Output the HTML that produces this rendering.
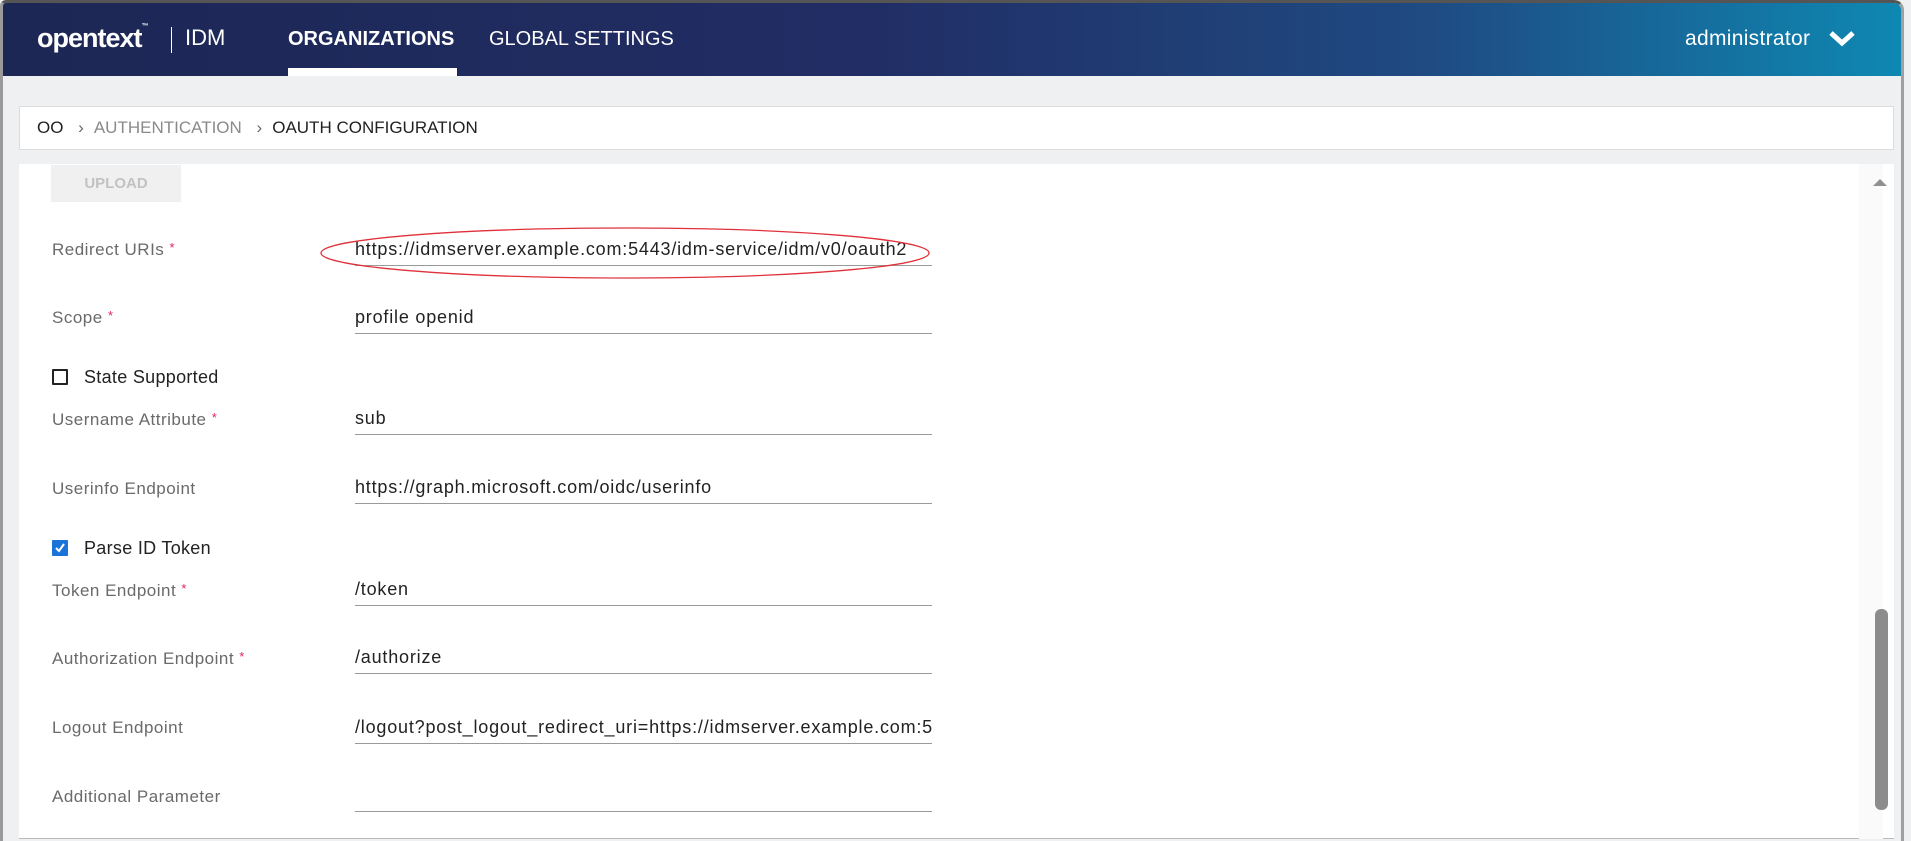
<!DOCTYPE html>
<html><head><meta charset="utf-8"><style>
*{margin:0;padding:0;box-sizing:border-box}
body{width:1911px;height:841px;overflow:hidden;background:#eff0f2;font-family:"Liberation Sans",sans-serif;position:relative}
.frame{position:absolute;left:0;top:0;width:1904px;height:841px;border-left:3px solid #9a9a9a;border-top:3px solid #555;border-right:3px solid #a0a0a0;background:#eff0f2;border-radius:6px 10px 0 0;overflow:hidden}
.hdr{position:absolute;left:0;top:0;right:0;height:73px;background:linear-gradient(90deg,#1d2755 0%,#212d64 45%,#1f4a82 75%,#0e88b2 100%)}
.hdr div{position:absolute;color:#fff;white-space:nowrap}
.a{position:absolute;white-space:nowrap}
.lbl{position:absolute;left:49px;color:#6a6a6a;font-size:17px;letter-spacing:0.5px}
.lbl b{color:#e0245e;font-weight:normal;font-size:13px;vertical-align:top}
.inp{position:absolute;left:352px;width:577px;border-bottom:1px solid #9a9a9a;height:30px;font-size:18px;letter-spacing:0.8px;color:#222;padding-top:3px;white-space:nowrap;overflow:hidden}
.cb{position:absolute;left:49px;width:16px;height:16px;border:2px solid #222;border-radius:1px}
.ct{position:absolute;left:81px;font-size:18px;color:#222;letter-spacing:0.3px}
</style></head><body>
<div class="frame">
<div class="hdr">
<div style="left:34px;top:20px;font-size:27px;font-weight:bold;letter-spacing:-1px">opentext<span style="font-size:7px;vertical-align:top">™</span></div>
<div style="left:168px;top:24px;width:1px;height:26px;background:#fff"></div>
<div style="left:182px;top:22px;font-size:22px">IDM</div>
<div style="left:285px;top:25px;font-size:20px;font-weight:bold">ORGANIZATIONS</div>
<div style="left:285px;top:65px;width:169px;height:8px;background:#fff"></div>
<div style="left:486px;top:25px;font-size:20px">GLOBAL SETTINGS</div>
<div style="left:1682px;top:24px;font-size:21px;letter-spacing:0.3px">administrator</div>
<svg style="position:absolute;left:1825px;top:27px" width="28" height="18" viewBox="0 0 28 18"><path d="M3 3 L14 13 L25 3" stroke="#fff" stroke-width="5" fill="none"/></svg>
</div>
<div class="a" style="left:16px;top:103px;width:1875px;height:44px;background:#fff;border:1px solid #dcdcdc"></div>
<div class="a" style="left:34px;top:115px;font-size:17px;color:#222">OO <span style="color:#666;margin:0 10px">›</span><span style="color:#8a8a8a">AUTHENTICATION</span> <span style="color:#666;margin:0 10px">›</span>OAUTH CONFIGURATION</div>
<div class="a" style="left:16px;top:161px;width:1875px;height:675px;background:#fff;border-bottom:1px solid #bbb"></div>
<div class="a" style="left:1856px;top:161px;width:24px;height:675px;background:#fafafa"></div>
<svg style="position:absolute;left:1869px;top:174px" width="16" height="10"><path d="M1 9 L8 2 L15 9Z" fill="#909090"/></svg>
<div class="a" style="left:1872px;top:606px;width:13px;height:201px;background:#8c8c8c;border-radius:6px"></div>
<div class="a" style="left:48px;top:162px;width:130px;height:37px;background:#f0f0f0;color:#c2c2c2;font-weight:bold;font-size:15px;text-align:center;line-height:37px">UPLOAD</div>

<div class="lbl" style="top:237px">Redirect URIs <b>*</b></div>
<div class="inp" style="top:233px">https://idmserver.example.com:5443/idm-service/idm/v0/oauth2</div>
<div class="lbl" style="top:305px">Scope <b>*</b></div>
<div class="inp" style="top:301px">profile openid</div>
<div class="cb" style="top:366px"></div><div class="ct" style="top:364px">State Supported</div>
<div class="lbl" style="top:407px">Username Attribute <b>*</b></div>
<div class="inp" style="top:402px">sub</div>
<div class="lbl" style="top:476px">Userinfo Endpoint</div>
<div class="inp" style="top:471px">https://graph.microsoft.com/oidc/userinfo</div>
<div class="cb" style="top:537px;background:#1a73d9;border-color:#1a73d9"><svg width="12" height="12" style="position:absolute;left:0;top:0"><path d="M2 6 L5 9 L10 2" stroke="#fff" stroke-width="2" fill="none"/></svg></div><div class="ct" style="top:535px">Parse ID Token</div>
<div class="lbl" style="top:578px">Token Endpoint <b>*</b></div>
<div class="inp" style="top:573px">/token</div>
<div class="lbl" style="top:646px">Authorization Endpoint <b>*</b></div>
<div class="inp" style="top:641px">/authorize</div>
<div class="lbl" style="top:715px">Logout Endpoint</div>
<div class="inp" style="top:711px">/logout?post_logout_redirect_uri=https://idmserver.example.com:5443/idm-service</div>
<div class="lbl" style="top:784px">Additional Parameter</div>
<div class="inp" style="top:779px"></div>
<svg style="position:absolute;left:0;top:0" width="1000" height="300"><ellipse cx="622" cy="250" rx="304" ry="25" fill="none" stroke="#e0303a" stroke-width="1.3"/></svg>
</div>
</body></html>
